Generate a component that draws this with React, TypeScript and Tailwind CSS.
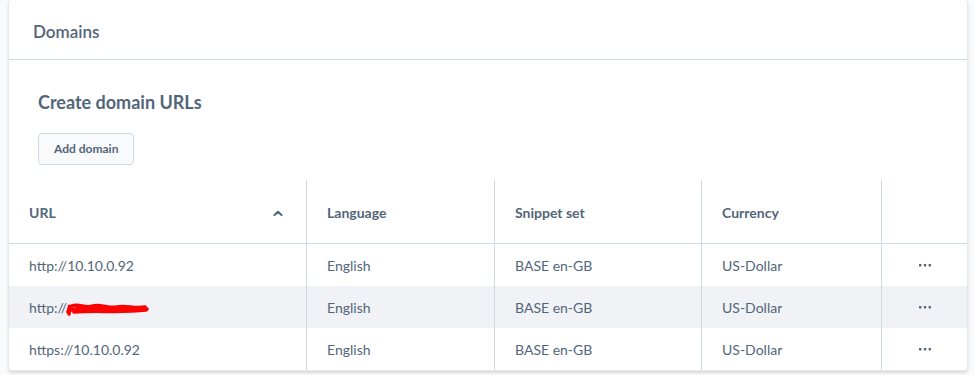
import React from "react";

const font = { fontFamily: '"Source Sans Pro", Lato, "Noto Sans", sans-serif' };

function Caret() {
  return (
    <svg width="10" height="6" viewBox="0 0 10 6" className="block">
      <path d="M1.5 5 L5 1.8 L8.5 5" fill="none" stroke="#52667a" strokeWidth="2" strokeLinecap="round" strokeLinejoin="round" />
    </svg>
  );
}

function Dots() {
  return (
    <svg width="14" height="4" viewBox="0 0 14 4" className="block">
      <rect x="1" y="1" width="2.4" height="2.4" rx="0.6" fill="#52667a" />
      <rect x="5.8" y="1" width="2.4" height="2.4" rx="0.6" fill="#52667a" />
      <rect x="10.6" y="1" width="2.4" height="2.4" rx="0.6" fill="#52667a" />
    </svg>
  );
}

function Scribble() {
  return (
    <svg width="86" height="20" viewBox="0 0 86 20" className="block -ml-[2px]">
      <path
        d="M3 15 L5 8 L4 17 M7 9 C14 6 20 12 28 9 C36 7 44 12 52 10 C60 8 70 12 80 10 M6 13 C20 10 40 15 60 12 C70 11 78 13 82 12 M9 15 C30 13 55 16 81 13 M12 11 C30 10 50 13 78 11"
        fill="none"
        stroke="#ff0000"
        strokeWidth="3.6"
        strokeLinecap="round"
      />
    </svg>
  );
}

const rows = [
  { url: "http://10.10.0.92", redacted: false },
  { url: "http://", redacted: true },
  { url: "https://10.10.0.92", redacted: false },
];

export default function App() {
  return (
    <div className="min-h-screen bg-[#f9fafb] pl-2 pr-[6px] text-[#52667a]" style={font}>
      <div className="bg-white rounded-[4px] border border-[#e3e8ed] border-t-0 shadow-[0_2px_3px_rgba(0,0,0,0.12)] overflow-hidden">
        <div className="h-[60px] px-6 flex items-center border-b border-[#d1d9e0]">
          <span className="text-[17px] font-semibold pt-[4px]">Domains</span>
        </div>
        <div className="pt-[30px] pl-[29px]">
          <div className="text-[18px] font-bold leading-6">Create domain URLs</div>
          <button className="mt-[19px] h-[32px] px-[15px] rounded-[4px] border border-[#d1d9e0] bg-[#f9fafb] text-[12px] font-bold text-[#52667a]">
            Add domain
          </button>
        </div>
        <div className="mt-[15px] text-[14px]">
          <div className="grid grid-cols-[298px_188px_207px_180px_1fr] h-[64px] border-b border-[#d1d9e0] font-bold">
            <div className="flex items-center justify-between pl-5 pr-[23px] border-r border-[#d1d9e0] pt-[2px]">
              <span>URL</span>
              <Caret />
            </div>
            <div className="flex items-center pl-5 border-r border-[#d1d9e0] pt-[2px]">Language</div>
            <div className="flex items-center pl-5 border-r border-[#d1d9e0] pt-[2px]">Snippet set</div>
            <div className="flex items-center pl-5 border-r border-[#d1d9e0] pt-[2px]">Currency</div>
            <div />
          </div>
          {rows.map((r, i) => (
            <div
              key={i}
              className={`grid grid-cols-[298px_188px_207px_180px_1fr] h-[42px] ${i === 1 ? "bg-[#f0f2f5]" : "bg-white"}`}
            >
              <div className="flex items-center pl-5 border-r border-[#d1d9e0]">
                <span>{r.url}</span>
                {r.redacted && <Scribble />}
              </div>
              <div className="flex items-center pl-5 border-r border-[#d1d9e0]">English</div>
              <div className="flex items-center pl-5 border-r border-[#d1d9e0]">BASE en-GB</div>
              <div className="flex items-center pl-5 border-r border-[#d1d9e0]">US-Dollar</div>
              <div className="flex items-center justify-center">
                <Dots />
              </div>
            </div>
          ))}
        </div>
      </div>
    </div>
  );
}
